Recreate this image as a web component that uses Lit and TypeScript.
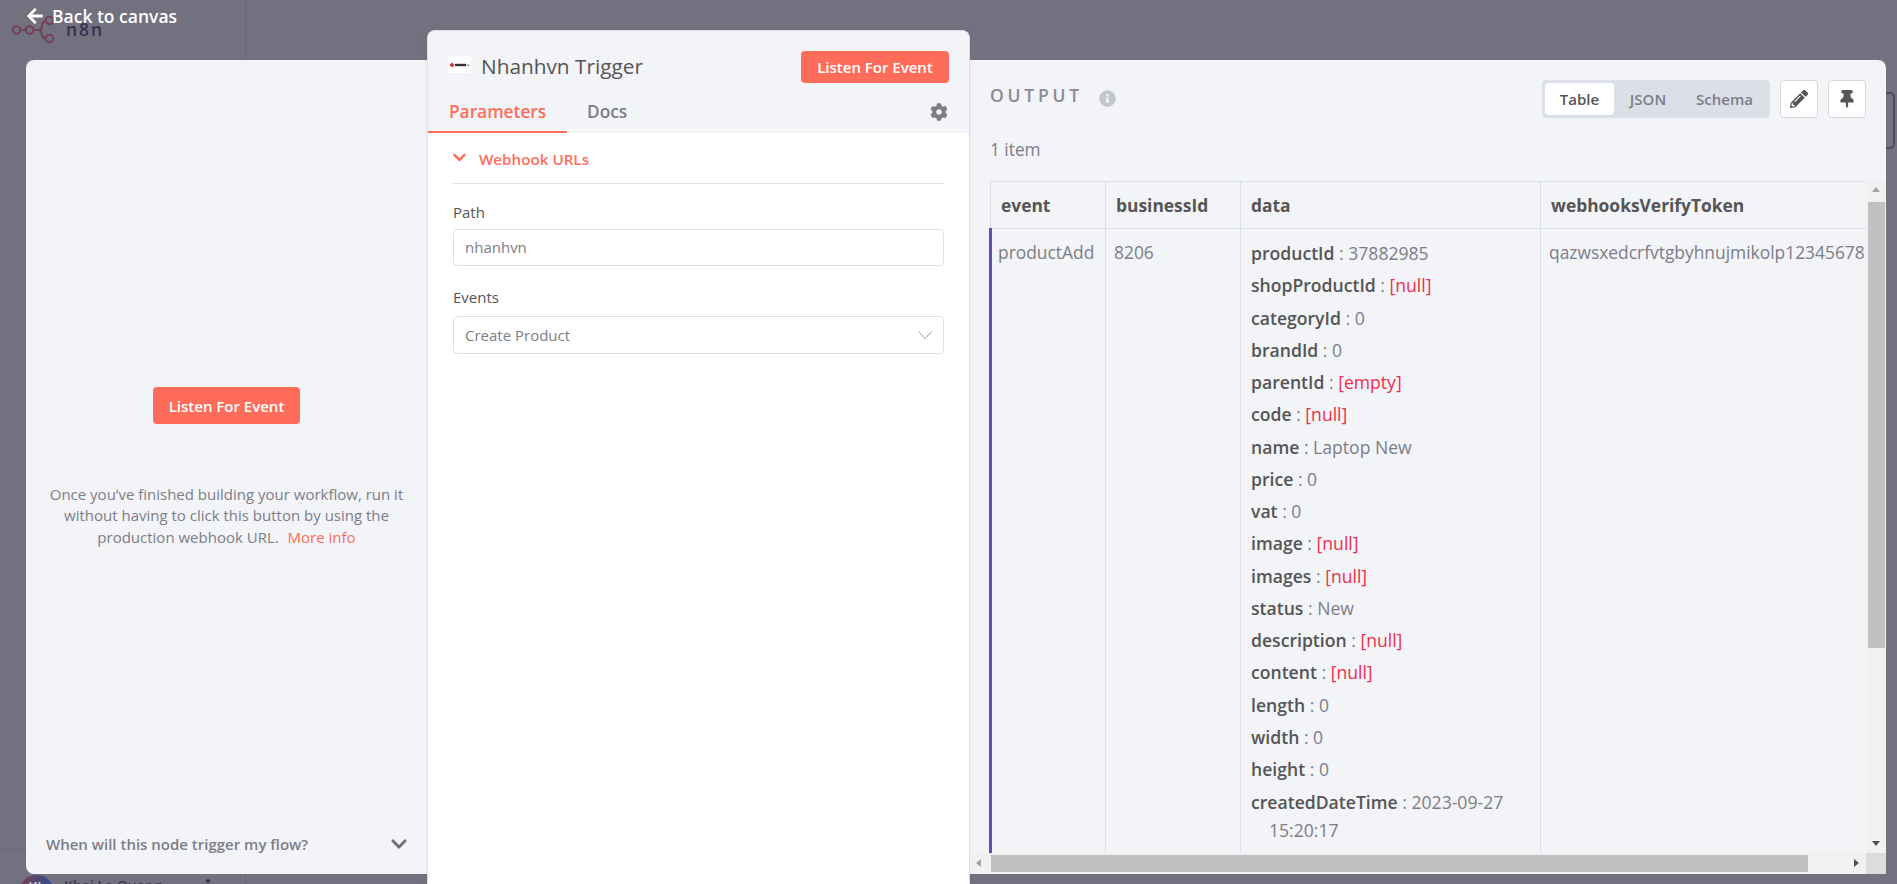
import { LitElement, html, css, svg } from "lit";
import { customElement } from "lit/decorators.js";

const chevron = "M207.029 381.476L12.686 187.132c-9.373-9.373-9.373-24.569 0-33.941l22.667-22.667c9.357-9.357 24.522-9.375 33.901-.04L224 284.505l154.745-154.021c9.379-9.335 24.544-9.317 33.901.04l22.667 22.667c9.373 9.373 9.373 24.569 0 33.941L240.971 381.476c-9.373 9.372-24.569 9.372-33.942 0z";
const arrowLeft = "M257.5 445.1l-22.2 22.2c-9.4 9.4-24.6 9.4-33.9 0L7 273c-9.4-9.4-9.4-24.6 0-33.9L201.4 44.7c9.4-9.4 24.6-9.4 33.9 0l22.2 22.2c9.5 9.5 9.3 25-.4 34.3L136.6 216H424c13.3 0 24 10.7 24 24v32c0 13.3-10.7 24-24 24H136.6l120.5 114.8c9.8 9.3 10 24.8.4 34.3z";
const cog = "M487.4 315.7l-42.6-24.6c4.3-23.2 4.3-47 0-70.2l42.6-24.6c4.9-2.8 7.1-8.6 5.5-14-11.1-35.6-30-67.8-54.7-94.6-3.8-4.1-10-5.1-14.8-2.3L380.8 110c-17.9-15.4-38.5-27.3-60.8-35.1V25.8c0-5.6-3.9-10.5-9.4-11.7-36.7-8.2-74.3-7.8-109.2 0-5.5 1.2-9.4 6.1-9.4 11.7V75c-22.2 7.9-42.8 19.8-60.8 35.1L88.7 85.5c-4.9-2.8-11-1.9-14.8 2.3-24.7 26.7-43.6 58.9-54.7 94.6-1.7 5.4.6 11.2 5.5 14L67.3 221c-4.3 23.2-4.3 47 0 70.2l-42.6 24.6c-4.9 2.8-7.1 8.6-5.5 14 11.1 35.6 30 67.8 54.7 94.6 3.8 4.1 10 5.1 14.8 2.3l42.6-24.6c17.9 15.4 38.5 27.3 60.8 35.1v49.2c0 5.6 3.9 10.5 9.4 11.7 36.7 8.2 74.3 7.8 109.2 0 5.5-1.2 9.4-6.1 9.4-11.7v-49.2c22.2-7.9 42.8-19.8 60.8-35.1l42.6 24.6c4.9 2.8 11 1.9 14.8-2.3 24.7-26.7 43.6-58.9 54.7-94.6 1.5-5.5-.7-11.3-5.6-14.1zM256 336c-44.1 0-80-35.9-80-80s35.9-80 80-80 80 35.9 80 80-35.9 80-80 80z";
const pen = "M497.9 142.1l-46.1 46.1c-4.7 4.7-12.3 4.7-17 0l-111-111c-4.7-4.7-4.7-12.3 0-17l46.1-46.1c18.7-18.7 49.1-18.7 67.9 0l60.1 60.1c18.8 18.7 18.8 49.1 0 67.9zM284.2 99.8L21.6 362.4.4 483.9c-2.9 16.4 11.4 30.6 27.8 27.8l121.5-21.3 262.6-262.6c4.7-4.7 4.7-12.3 0-17l-111-111c-4.8-4.7-12.4-4.7-17.1 0zM124.1 339.9c-5.5-5.5-5.5-14.3 0-19.8l154-154c5.5-5.5 14.3-5.5 19.8 0s5.5 14.3 0 19.8l-154 154c-5.5 5.5-14.3 5.5-19.8 0zM88 424h48v36.3l-64.5 11.3-31.1-31.1L51.7 376H88v48z";
const pin = "M298.028 214.267L285.793 96H328c13.255 0 24-10.745 24-24V24c0-13.255-10.745-24-24-24H56C42.745 0 32 10.745 32 24v48c0 13.255 10.745 24 24 24h42.207L85.972 214.267C37.465 236.82 0 277.261 0 328c0 13.255 10.745 24 24 24h136v104.007c0 1.242.289 2.467.845 3.578l24 48c2.941 5.882 11.364 5.893 14.311 0l24-48a8.008 8.008 0 0 0 .845-3.578V352h136c13.255 0 24-10.745 24-24-.001-51.183-37.983-91.42-85.973-113.733z";
const info = "M256 8C119.043 8 8 119.083 8 256c0 136.997 111.043 248 248 248s248-111.003 248-248C504 119.083 392.957 8 256 8zm0 110c23.196 0 42 18.804 42 42s-18.804 42-42 42-42-18.804-42-42 18.804-42 42-42zm56 254c0 6.627-5.373 12-12 12h-88c-6.627 0-12-5.373-12-12v-24c0-6.627 5.373-12 12-12h12v-64h-12c-6.627 0-12-5.373-12-12v-24c0-6.627 5.373-12 12-12h64c6.627 0 12 5.373 12 12v100h12c6.627 0 12 5.373 12 12v24z";

const fa = (d: string, vb: string, cls: string) =>
  html`<svg class=${cls} viewBox=${vb} fill="currentColor" aria-hidden="true">${svg`<path d=${d}></path>`}</svg>`;

type Val = { k: string; v: string; bad?: boolean };
const rows: Val[] = [
  { k: "productId", v: "37882985" },
  { k: "shopProductId", v: "[null]", bad: true },
  { k: "categoryId", v: "0" },
  { k: "brandId", v: "0" },
  { k: "parentId", v: "[empty]", bad: true },
  { k: "code", v: "[null]", bad: true },
  { k: "name", v: "Laptop New" },
  { k: "price", v: "0" },
  { k: "vat", v: "0" },
  { k: "image", v: "[null]", bad: true },
  { k: "images", v: "[null]", bad: true },
  { k: "status", v: "New" },
  { k: "description", v: "[null]", bad: true },
  { k: "content", v: "[null]", bad: true },
  { k: "length", v: "0" },
  { k: "width", v: "0" },
  { k: "height", v: "0" },
  { k: "createdDateTime", v: "2023-09-27 15:20:17" },
];

@customElement("app-root")
export class AppRoot extends LitElement {
  static styles = css`
    :host {
      display: block;
      position: relative;
      width: 100%;
      height: 884px;
      overflow: hidden;
      background: #73707f;
      font-family: "Open Sans", sans-serif;
      color: #555;
    }
    * { box-sizing: border-box; }

    /* dimmed workflow canvas that lies under the dialog */
    .canvas { position: absolute; inset: 0; }
    .logo { position: absolute; left: 10px; top: 14px; width: 56px; height: 32px; }
    .wordmark { position: absolute; left: 66px; top: 17px; font-size: 17.5px; font-weight: 600; letter-spacing: 2px; line-height: 25px; color: #35304f; }
    .side-line { position: absolute; left: 245px; top: 0; bottom: 0; width: 1px; background: #696775; }
    .h-line { position: absolute; left: 0; top: 849px; width: 245px; height: 1px; background: #696775; }
    .avatar { position: absolute; left: 19px; top: 875px; width: 35px; height: 35px; border-radius: 50%; background: linear-gradient(90deg, #7a3f55, #2f4f8f); color: #c9c9d4; font-size: 14px; font-weight: 600; text-align: center; line-height: 24px; }
    .user { position: absolute; left: 64px; top: 876px; font-size: 14px; font-weight: 600; line-height: 20px; color: #3f3d4d; white-space: nowrap; }
    .dots { position: absolute; left: 206px; top: 879px; width: 4px; height: 4px; border-radius: 50%; background: #3a3848; }
    .edge-box { position: absolute; left: 1876px; top: 92px; width: 19px; height: 57px; border: 2px solid #4e4c5c; border-radius: 5px; }

    /* dialog */
    .overlay { position: absolute; inset: 0; display: flex; flex-direction: column; }
    .back { height: 30px; padding-left: 27px; display: flex; align-items: flex-start; gap: 9px; color: #fff; font-size: 17.5px; font-weight: 600; line-height: 32px; }
    .back .i { width: 16px; height: 18px; margin-top: 7px; }
    .panels { flex: 1; min-height: 0; display: flex; padding: 30px 11px 10px 26px; }

    .left { width: 401px; background: #f2f4f8; border-radius: 8px 0 0 8px; display: flex; flex-direction: column; }
    .left-main { flex: 1; padding-top: 327px; display: flex; flex-direction: column; align-items: center; }
    .btn { background: #ff6d5a; color: #fff; font-size: 15px; font-weight: 600; border-radius: 4px; display: flex; align-items: center; justify-content: center; white-space: nowrap; }
    .left .btn { width: 147px; height: 37px; }
    .hint { margin-top: 60px; width: 375px; text-align: center; font-size: 15px; line-height: 21.3px; color: #7d7d87; }
    .hint a { color: #ff6d5a; margin-left: 5px; }
    .faq { display: flex; justify-content: space-between; align-items: center; padding: 0 20px; height: 60px; font-size: 15px; font-weight: 600; color: #7d7d87; margin-top: auto; }
    .faq .i { width: 16px; height: 18px; color: #6f6f79; }

    .center { width: 543px; margin: -30px 0 -10px; background: #fff; border-radius: 8px 8px 0 0; border: 1px solid #dbdfe7; border-bottom: 0; display: flex; flex-direction: column; box-shadow: 0 0 6px rgba(0,0,0,.05); position: relative; }
    .c-head { background: #f2f4f8; border-radius: 8px 8px 0 0; }
    .c-title { height: 70px; padding: 20px 20px 0 20px; display: flex; align-items: flex-start; }
    .nicon { width: 23px; height: 17px; margin-top: 5px; flex: none; }
    .c-title h1 { margin: 0 0 0 10px; font-size: 20.8px; font-weight: 400; line-height: 30px; color: #555; flex: 1; }
    .c-title .btn { width: 148px; height: 32px; }
    .tabs { height: 32px; display: flex; align-items: flex-start; padding-right: 21px; }
    .tab { font-size: 17.3px; font-weight: 600; color: #7d7d87; line-height: 22px; height: 32px; }
    .tab.on { color: #ff6d5a; border-bottom: 2px solid #ff6d5a; width: 139px; padding-left: 21px; }
    .tab.doc { margin-left: 20px; flex: 1; }
    .tabs .gear { width: 18px; height: 18px; color: #7d7d87; margin-top: 2px; }
    .c-body { padding: 0 25px; }
    .section { height: 51px; border-bottom: 1px solid #dbdfe7; display: flex; align-items: flex-start; padding-top: 14px; color: #ff6d5a; font-size: 15.2px; font-weight: 600; line-height: 24px; }
    .section .i { width: 13px; height: 15px; margin-top: 3px; margin-right: 13px; }
    label { display: block; font-size: 15px; line-height: 20px; color: #555; }
    .path-l { margin-top: 18px; }
    .box { height: 37px; margin-top: 7px; border: 1px solid #dbdfe7; border-radius: 4px; padding: 0 11px 2px; font-size: 15px; color: #7d7d87; display: flex; align-items: center; justify-content: space-between; }
    .ev-l { margin-top: 21px; }
    .ev-l + .box { margin-top: 9px; height: 38px; padding-bottom: 0; }
    .box svg { width: 14px; height: 8px; color: #9a9aa6; }

    .right { flex: 1; min-width: 0; background: #f2f4f8; border-radius: 0 8px 8px 0; display: flex; flex-direction: column; padding: 20px 0 0 20px; }
    .r-head { height: 38px; display: flex; align-items: flex-start; padding-right: 20px; }
    .r-title { font-size: 17.5px; font-weight: 600; letter-spacing: 3.75px; color: #8a8a94; line-height: 31px; }
    .r-head .info { width: 17px; height: 17px; color: #c4c6cd; margin: 10px 0 0 16px; }
    .seg { margin-left: auto; background: #dbdfe7; border-radius: 4px; height: 38px; width: 228px; padding: 3px; display: flex; align-items: center; font-size: 15px; font-weight: 600; color: #7d7d87; }
    .seg span { display: flex; align-items: center; justify-content: center; height: 32px; }
    .seg .on { width: 69px; background: #fff; border-radius: 4px; color: #555; }
    .seg .j { width: 68px; }
    .seg .s { width: 85px; }
    .tool { width: 38px; height: 38px; background: #fff; border: 1px solid #d6d8e0; border-radius: 4px; display: flex; align-items: center; justify-content: center; margin-left: 10px; color: #555; }
    .tool svg { width: 18px; height: 18px; }
    .count { font-size: 17.3px; line-height: 24px; color: #7d7d87; margin-top: 20px; height: 43px; }

    .frame { flex: 1; min-height: 0; display: grid; grid-template-columns: 1fr 20px; grid-template-rows: 1fr 21px; margin-left: -20px; }
    .viewport { overflow: hidden; padding-left: 19px; }
    table { border-collapse: collapse; table-layout: fixed; width: 950px; height: 672px; font-size: 17.4px; }
    th, td { border: 1px solid #dbdfe7; text-align: left; vertical-align: top; }
    th { height: 47px; padding: 0 10px; font-weight: 700; color: #555; vertical-align: middle; }
    td { padding: 9px 8px; color: #7d7d87; line-height: 28px; }
    td.first { border-left: 3px solid #5c4ec2; padding-left: 6px; }
    td.nowrap { white-space: nowrap; overflow: hidden; padding-right: 0; }
    td.data { padding: 10px 10px; font-size: 17.6px; }
    .kv { padding-left: 18px; text-indent: -18px; margin-bottom: 4.28px; }
    .kv b { font-weight: 600; color: #555; }
    .kv .bad { color: #f02d4b; }

    .sb { background: #f1f1f1; position: relative; display: flex; }
    .sb-v { flex-direction: column; align-items: center; }
    .sb-h { align-items: center; }
    .sb-v .thumb { width: 17px; height: 446px; background: #c1c1c1; margin-top: 21px; }
    .sb-h .thumb { height: 17px; width: 817px; background: #c1c1c1; margin-left: 21px; }
    .tri { position: absolute; width: 0; height: 0; border: 4px solid transparent; }
    .t-up { top: 6px; left: 6px; border-top: 0; border-bottom: 5px solid #a3a3a3; }
    .t-dn { bottom: 7px; left: 6px; border-bottom: 0; border-top: 5px solid #505050; }
    .t-lf { left: 6px; top: 6px; border-left: 0; border-right: 5px solid #a3a3a3; }
    .t-rt { right: 7px; top: 6px; border-right: 0; border-left: 5px solid #505050; }
    .corner { background: #dcdcdc; }
  `;

  render() {
    return html`
      <div class="canvas">
        <svg class="logo" viewBox="0 0 56 32" fill="none" stroke="#72405a" stroke-width="2">
          <circle cx="6.5" cy="16" r="3.8"></circle>
          <circle cx="19.5" cy="16" r="3.8"></circle>
          <path d="M10.5 16h5M23.5 16h5c3 0 3-2 3.5-5 .5-3 2-4 4-4"></path>
          <path d="M28.5 16c3 0 3 2 3.5 5 .5 3 2 3.5 4 3.5"></path>
          <circle cx="39.5" cy="6.5" r="3.8"></circle>
          <circle cx="39.5" cy="24.5" r="3.8"></circle>
        </svg>
        <div class="wordmark">n8n</div>
        <div class="side-line"></div>
        <div class="h-line"></div>
        <div class="avatar">KL</div>
        <div class="user">Khai Le Quang</div>
        <div class="dots"></div>
        <div class="edge-box"></div>
      </div>

      <div class="overlay">
        <div class="back">${fa(arrowLeft, "0 0 448 512", "i")}<span>Back to canvas</span></div>
        <div class="panels">
          <section class="left">
            <div class="left-main">
              <div class="btn">Listen For Event</div>
              <div class="hint">Once you’ve finished building your workflow, run it without having to click this button by using the production webhook URL. <a>More info</a></div>
            </div>
            <div class="faq"><span>When will this node trigger my flow?</span>${fa(chevron, "0 0 448 512", "i")}</div>
          </section>

          <section class="center">
            <div class="c-head">
              <div class="c-title">
                <svg class="nicon" viewBox="0 0 23 17">
                  <rect width="23" height="17" fill="#fff"></rect>
                  <path d="M1.5 9l2.5-2.5L6.5 9 4 11.5z" fill="#e02b3a"></path>
                  <rect x="7" y="7.8" width="11" height="2.4" fill="#33333b"></rect>
                  <rect x="18.5" y="8.5" width="3" height="1.4" fill="#9a9aa0"></rect>
                </svg>
                <h1>Nhanhvn Trigger</h1>
                <div class="btn">Listen For Event</div>
              </div>
              <div class="tabs">
                <div class="tab on">Parameters</div>
                <div class="tab doc">Docs</div>
                ${fa(cog, "0 0 512 512", "gear")}
              </div>
            </div>
            <div class="c-body">
              <div class="section">${fa(chevron, "0 0 448 512", "i")}<span>Webhook URLs</span></div>
              <label class="path-l">Path</label>
              <div class="box">nhanhvn</div>
              <label class="ev-l">Events</label>
              <div class="box">
                <span>Create Product</span>
                <svg viewBox="0 0 14 8" fill="none" stroke="currentColor" stroke-width="1"><path d="M.5.5L7 7.5 13.5.5"></path></svg>
              </div>
            </div>
          </section>

          <section class="right">
            <div class="r-head">
              <div class="r-title">OUTPUT</div>
              ${fa(info, "0 0 512 512", "info")}
              <div class="seg"><span class="on">Table</span><span class="j">JSON</span><span class="s">Schema</span></div>
              <div class="tool">${fa(pen, "0 0 512 512", "")}</div>
              <div class="tool">${fa(pin, "0 0 384 512", "")}</div>
            </div>
            <div class="count">1 item</div>
            <div class="frame">
              <div class="viewport">
                <table>
                  <colgroup><col style="width:115px"><col style="width:135px"><col style="width:300px"><col style="width:400px"></colgroup>
                  <thead><tr><th>event</th><th>businessId</th><th>data</th><th>webhooksVerifyToken</th></tr></thead>
                  <tbody><tr>
                    <td class="first">productAdd</td>
                    <td>8206</td>
                    <td class="data">${rows.map(
                      (r) => html`<div class="kv"><b>${r.k}</b> : <span class=${r.bad ? "bad" : ""}>${r.v}</span></div>`
                    )}</td>
                    <td class="nowrap">qazwsxedcrfvtgbyhnujmikolp12345678</td>
                  </tr></tbody>
                </table>
              </div>
              <div class="sb sb-v"><div class="thumb"></div><i class="tri t-up"></i><i class="tri t-dn"></i></div>
              <div class="sb sb-h"><div class="thumb"></div><i class="tri t-lf"></i><i class="tri t-rt"></i></div>
              <div class="corner"></div>
            </div>
          </section>
        </div>
      </div>
    `;
  }
}
